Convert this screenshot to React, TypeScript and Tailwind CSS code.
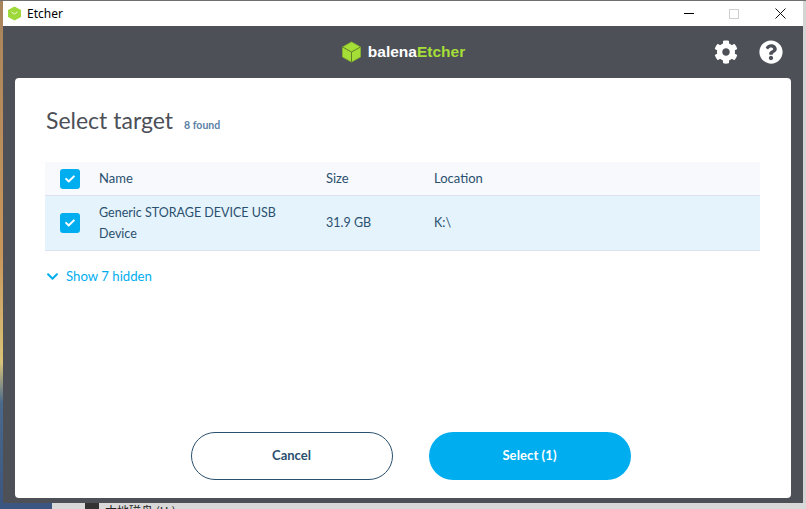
import { FaCog, FaQuestionCircle, FaCheck, FaChevronDown } from 'react-icons/fa'

function Check() {
  return (
    <div className="w-5 h-5 rounded-[3px] bg-[#00aeef] flex items-center justify-center text-white">
      <FaCheck className="w-[10px] h-[10px]" />
    </div>
  )
}

// small app icon in the title bar
function AppIcon() {
  return (
    <svg width="15" height="15" viewBox="0 0 15 15" className="ml-[4px]">
      <path d="M7.5 0.5 L14 4 V11 L7.5 14.5 L1 11 V4 Z" fill="#9fd83a" />
      <path d="M4.5 6 L7.5 8 L10.5 6" stroke="#eef8d8" strokeWidth="1" fill="none" />
    </svg>
  )
}

function Cube() {
  return (
    <svg width="21" height="22" viewBox="0 0 21 22">
      <path d="M10.5 1 L19.5 6 V16 L10.5 21 L1.5 16 V6 Z" fill="#a5de37" stroke="#86b82c" strokeWidth="0.8" />
      <path d="M10.5 11 L19.5 6 M10.5 11 L1.5 6 M10.5 11 V21" stroke="#5f7f24" strokeWidth="1" fill="none" />
    </svg>
  )
}

export default function App() {
  return (
    <div className="w-[806px] h-[509px] overflow-hidden flex flex-col bg-[#d9d9d9] font-['Lato',sans-serif]">
      <div className="h-px shrink-0 bg-[#6f6f6f]" />
      <div className="flex h-[502px] shrink-0">
        <div className="w-[3px] bg-[linear-gradient(180deg,#a8845c_0%,#c9965a_50%,#d9c478_72%,#4a6a8c_80%,#3b5680_100%)]" />
        <div className="w-[800px] flex flex-col">
          <div className="h-[25px] bg-white flex items-center shrink-0 font-['Noto_Sans',sans-serif]">
            <AppIcon />
            <span className="ml-[5px] text-[12px] text-black">Etcher</span>
            <div className="ml-auto flex items-center h-full">
              <div className="w-[10px] h-px bg-black mr-[35px]" />
              <div className="w-[10px] h-[10px] border border-[#cfcfcf] mr-[36px]" />
              <svg width="11" height="11" viewBox="0 0 11 11" className="mr-[17px]">
                <path d="M0.5 0.5 L10.5 10.5 M10.5 0.5 L0.5 10.5" stroke="#111" strokeWidth="1" />
              </svg>
            </div>
          </div>
          <div className="flex-1 bg-[#4d5057] flex flex-col px-[12px] pb-[5px]">
            <div className="h-[52px] shrink-0 relative flex items-center justify-center">
              <div className="flex items-center">
                <Cube />
                <span className="ml-[6px] text-[15.5px] font-bold text-white font-['Liberation_Sans',sans-serif]">balena</span>
                <span className="text-[15.5px] font-bold text-[#a5de37] font-['Liberation_Sans',sans-serif]">Etcher</span>
              </div>
              <div className="absolute right-[8px] top-[14px] flex items-center gap-[21px] text-white">
                <FaCog className="w-6 h-6" />
                <FaQuestionCircle className="w-6 h-6" />
              </div>
            </div>
            <div className="flex-1 bg-white rounded-[4px] flex flex-col pl-[30px] pr-[31px] text-[#2a506f]">
              <div className="flex items-baseline mt-[26px] h-[33px]">
                <h1 className="text-[23px] leading-[33px] text-[#4d5057] ml-px">Select target</h1>
                <span className="ml-[11px] text-[10.5px] font-bold text-[#5b82a7]">8 found</span>
              </div>
              <div className="mt-[25px] text-[12.5px]">
                <div className="h-[34px] bg-[#f8f9fd] border-b border-[#dde1f0] flex items-center">
                  <div className="w-[54px] pl-[15px]"><Check /></div>
                  <div className="w-[227px] text-[13px]">Name</div>
                  <div className="w-[108px] text-[13px]">Size</div>
                  <div className="text-[13px]">Location</div>
                </div>
                <div className="h-[55px] bg-[#e5f3fc] border-b border-[#dde1f0] flex items-center">
                  <div className="w-[54px] pl-[15px]"><Check /></div>
                  <div className="w-[227px] pr-[40px] leading-[21px]">Generic STORAGE DEVICE USB Device</div>
                  <div className="w-[108px]">31.9 GB</div>
                  <div>K:\</div>
                </div>
              </div>
              <div className="mt-[16px] flex items-center text-[13.2px] text-[#00aeef]">
                <FaChevronDown className="w-[13px] h-[13px] ml-px" />
                <span className="ml-[7px]">Show 7 hidden</span>
              </div>
              <div className="mt-auto mb-[18px] ml-[16px] flex justify-center gap-[36px]">
                <button className="w-[202px] h-[48px] rounded-full border border-[#2a506f] bg-white text-[13px] font-bold text-[#2a506f]">Cancel</button>
                <button className="w-[202px] h-[48px] rounded-full bg-[#00aeef] text-[13px] tracking-[0.1px] font-bold text-white">Select (1)</button>
              </div>
            </div>
          </div>
        </div>
        <div className="w-[3px] bg-[#d4d4d4]" />
      </div>
      <div className="flex-1 flex overflow-hidden">
        <div className="w-[52px] bg-[#3b5680]" />
        <div className="w-[33px]" />
        <div className="w-[14px] bg-[#333]" />
        <div className="ml-[6px] text-[12px] leading-[16px] text-[#222] font-['Noto_Sans_CJK_SC',sans-serif]">本地磁盘 (H:)</div>
      </div>
    </div>
  )
}
